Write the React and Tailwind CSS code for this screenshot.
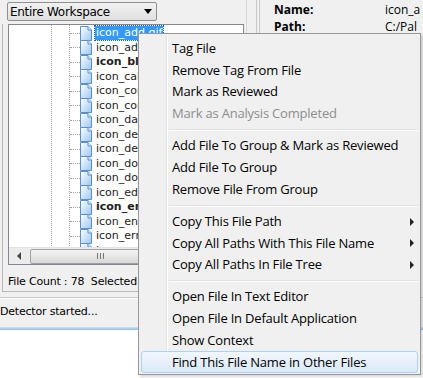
const files = [
  { name: "icon_add.gif", selected: true },
  { name: "icon_admin.gif" },
  { name: "icon_blank.gif", bold: true },
  { name: "icon_calendar.gif" },
  { name: "icon_comment.gif" },
  { name: "icon_complete.gif" },
  { name: "icon_dashboard.gif" },
  { name: "icon_delete.gif" },
  { name: "icon_details.gif" },
  { name: "icon_down.gif" },
  { name: "icon_download.gif" },
  { name: "icon_edit.gif" },
  { name: "icon_email.gif", bold: true },
  { name: "icon_end.gif" },
  { name: "icon_error.gif" },
  { name: "icon_export.gif" },
];

const menu = [
  [
    { label: "Tag File" },
    { label: "Remove Tag From File" },
    { label: "Mark as Reviewed" },
    { label: "Mark as Analysis Completed", disabled: true },
  ],
  [
    { label: "Add File To Group & Mark as Reviewed" },
    { label: "Add File To Group" },
    { label: "Remove File From Group" },
  ],
  [
    { label: "Copy This File Path", sub: true },
    { label: "Copy All Paths With This File Name", sub: true },
    { label: "Copy All Paths In File Tree", sub: true },
  ],
  [
    { label: "Open File In Text Editor" },
    { label: "Open File In Default Application" },
    { label: "Show Context" },
    { label: "Find This File Name in Other Files", hover: true },
  ],
];

function FileIcon() {
  return (
    <svg width="12" height="15" viewBox="0 0 12 15" className="shrink-0">
      <defs>
        <linearGradient id="fg" x1="0" y1="0" x2="1" y2="1">
          <stop offset="0" stopColor="#ffffff" />
          <stop offset="1" stopColor="#9cc7f0" />
        </linearGradient>
      </defs>
      <path d="M0.5 0.5 H8 L11.5 4 V14.5 H0.5 Z" fill="url(#fg)" stroke="#5a8fc9" />
      <path d="M8 0.5 V4 H11.5" fill="#dceeff" stroke="#5a8fc9" />
    </svg>
  );
}

function Tree() {
  return (
    <div className="relative h-[241px] w-[236px] border border-[#828790] bg-white overflow-hidden">
      <div className="absolute left-[42px] top-0 bottom-0 border-l border-dotted border-[#a0a0a0]" />
      <div className="absolute left-[60px] top-0 bottom-0 border-l border-dotted border-[#a0a0a0]" />
      <div className="flex flex-col pt-[1px]">
        {files.map((f, i) => (
          <div key={i} className="flex h-[14.5px] items-center">
            <div className="ml-[61px] w-[10px] border-t border-dotted border-[#a0a0a0]" />
            <FileIcon />
            {/* rows under the popup menu are cut where the menu starts */}
            <div className={"ml-[3px] " + (f.selected ? "" : "max-w-[43px] overflow-hidden")}>
              <span
                className={
                  "block px-[1px] leading-[14px] whitespace-nowrap " +
                  (f.bold ? "font-bold " : "") +
                  (f.selected ? "bg-[#3399ff] text-white outline outline-1 outline-dotted outline-[#1a5fb4]" : "text-[#222]")
                }
              >
                {f.name}
              </span>
            </div>
          </div>
        ))}
      </div>
      <div className="absolute left-0 right-0 bottom-0 h-[17px] flex items-center bg-[#ececec] border-t border-[#e3e3e3]">
        <div className="w-[20px] h-full flex items-center justify-center">
          <div className="w-0 h-0 border-y-[4px] border-y-transparent border-r-[4px] border-r-[#444]" />
        </div>
        <div className="ml-[1px] w-[140px] h-[15px] rounded-[2px] border border-[#a0a0a0] bg-gradient-to-b from-[#f4f4f4] to-[#d8d8d8] flex items-center justify-center gap-[2px]">
          <div className="w-[1px] h-[6px] bg-[#777]" />
          <div className="w-[1px] h-[6px] bg-[#777]" />
          <div className="w-[1px] h-[6px] bg-[#777]" />
        </div>
      </div>
    </div>
  );
}

export default function App() {
  return (
    <div className="relative w-[423px] h-[378px] overflow-hidden bg-white text-black">
      <div className="flex h-[297px] bg-[#f0f0f0]" style={{ fontFamily: "'DejaVu Sans', sans-serif" }}>
        <div className="w-[245px] text-[11px]">
          <div className="ml-[7px] mt-[2px] w-[150px] h-[19px] border border-[#8e8f8f] rounded-[2px] bg-gradient-to-b from-[#f2f2f2] to-[#e0e0e0] flex items-center pl-[2px] pr-[4px] text-[12px]">
            <span className="flex-1 tracking-[-0.3px]">Entire Workspace</span>
            <div className="w-0 h-0 border-x-[4px] border-x-transparent border-t-[5px] border-t-black" />
          </div>
          <div className="ml-[2px] mt-[3px] border-l border-b border-[#b8b8b8] h-[268px] pl-[5px]">
            <Tree />
            <div className="mt-[9px] w-[131px] overflow-hidden whitespace-nowrap tracking-[-0.2px]">File Count : 78&nbsp;&nbsp;Selected : 1</div>
          </div>
        </div>
        <div className="w-[16px] flex">
          <div className="ml-[1px] w-[1px] bg-[#d8d8d8]" />
          <div className="ml-[9px] w-[1px] bg-[#c8c8c8]" />
          <div className="ml-[2px] w-[1px] bg-[#c8c8c8]" />
        </div>
        <div className="flex-1 overflow-hidden pl-[13px] pt-[1px] text-[12px]" style={{ fontFamily: "'Open Sans', sans-serif" }}>
          {[
            ["Name:", "icon_a"],
            ["Path:", "C:/Pal"],
            ["Size:", "1.2KB"],
          ].map(([k, v]) => (
            <div key={k} className="flex h-[17px] items-center whitespace-nowrap">
              <span className="w-[111px] font-bold">{k}</span>
              <span>{v}</span>
            </div>
          ))}
        </div>
      </div>
      <div className="h-[30px] bg-[#f0f0f0] border-t border-[#c8c8c8]">
        <div className="border-t border-white h-full flex items-start pt-[5px] text-[11px] tracking-[-0.2px]" style={{ fontFamily: "'DejaVu Sans', sans-serif" }}>
          Detector started...
        </div>
      </div>
      <div className="h-[3px] bg-gradient-to-b from-[#cfe3f5] to-[#8fbfe8]" />

      <div
        className="absolute left-[138px] top-[33px] w-[283px] border border-[#979797] bg-[#f0f0f0] pt-[4px] pb-[1px] px-[2px] text-[13px] shadow-[2px_2px_2px_rgba(0,0,0,0.15)]"
        style={{ fontFamily: "'Open Sans', sans-serif" }}
      >
        <div className="absolute left-[27px] top-[2px] bottom-[2px] w-[2px] border-l border-[#e2e3e3] border-r border-r-white" />
        {menu.map((group, gi) => (
          <div key={gi}>
            {gi > 0 && (
              <div className="h-[10.5px] flex flex-col justify-center ml-[28px]">
                <div className="h-[1px] bg-[#e0e0e0]" />
                <div className="h-[1px] bg-white" />
              </div>
            )}
            {group.map((it) => (
              <div
                key={it.label}
                className={
                  "relative h-[21.7px] flex items-center pl-[30px] pr-[3px] whitespace-nowrap tracking-[-0.2px] rounded-[3px] border " +
                  (it.hover ? "border-[#aecff7] bg-gradient-to-b from-[#f2f7fd] to-[#dbe9fa] " : "border-transparent ") +
                  (it.disabled ? "text-[#8d8d8d]" : "text-black")
                }
              >
                <span className="flex-1">{it.label}</span>
                {it.sub && (
                  <div className="w-0 h-0 border-y-[4px] border-y-transparent border-l-[4px] border-l-[#222]" />
                )}
              </div>
            ))}
          </div>
        ))}
      </div>
    </div>
  );
}
